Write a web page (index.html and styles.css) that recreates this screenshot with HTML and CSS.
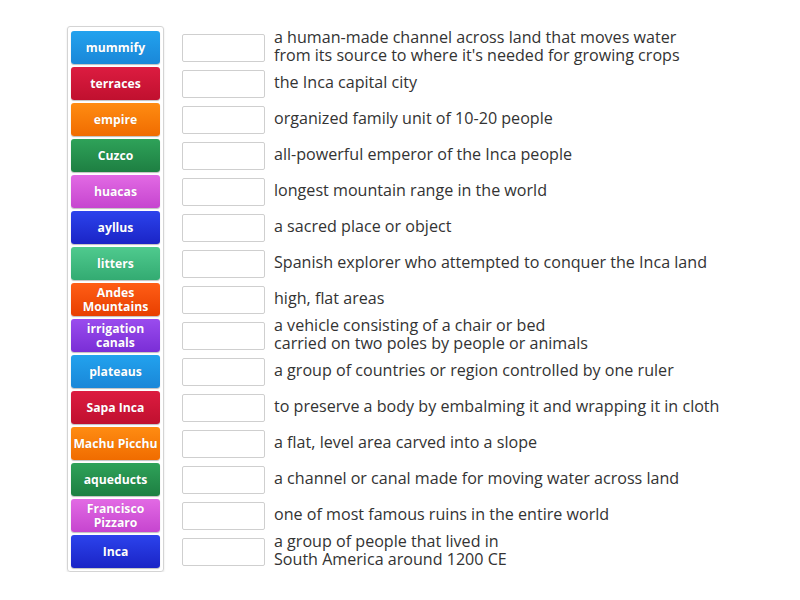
FILE: index.html
```html
<!DOCTYPE html>
<html>
<head>
<meta charset="utf-8">
<link rel="stylesheet" href="styles.css">
</head>
<body>
<div class="page">
  <div class="tiles">
    <div class="tile c-blue">mummify</div>
    <div class="tile c-red">terraces</div>
    <div class="tile c-orange">empire</div>
    <div class="tile c-green">Cuzco</div>
    <div class="tile c-magenta">huacas</div>
    <div class="tile c-navy">ayllus</div>
    <div class="tile c-teal">litters</div>
    <div class="tile c-redorange">Andes Mountains</div>
    <div class="tile c-purple">irrigation canals</div>
    <div class="tile c-blue">plateaus</div>
    <div class="tile c-red">Sapa Inca</div>
    <div class="tile c-orange">Machu Picchu</div>
    <div class="tile c-green">aqueducts</div>
    <div class="tile c-magenta">Francisco Pizzaro</div>
    <div class="tile c-navy">Inca</div>
  </div>
  <div class="defs">
    <div class="row"><div class="slot"></div><div class="def">a human-made channel across land that moves water<br>from its source to where it's needed for growing crops</div></div>
    <div class="row"><div class="slot"></div><div class="def">the Inca capital city</div></div>
    <div class="row"><div class="slot"></div><div class="def">organized family unit of 10-20 people</div></div>
    <div class="row"><div class="slot"></div><div class="def">all-powerful emperor of the Inca people</div></div>
    <div class="row"><div class="slot"></div><div class="def">longest mountain range in the world</div></div>
    <div class="row"><div class="slot"></div><div class="def">a sacred place or object</div></div>
    <div class="row"><div class="slot"></div><div class="def">Spanish explorer who attempted to conquer the Inca land</div></div>
    <div class="row"><div class="slot"></div><div class="def">high, flat areas</div></div>
    <div class="row"><div class="slot"></div><div class="def">a vehicle consisting of a chair or bed<br>carried on two poles by people or animals</div></div>
    <div class="row"><div class="slot"></div><div class="def">a group of countries or region controlled by one ruler</div></div>
    <div class="row"><div class="slot"></div><div class="def">to preserve a body by embalming it and wrapping it in cloth</div></div>
    <div class="row"><div class="slot"></div><div class="def">a flat, level area carved into a slope</div></div>
    <div class="row"><div class="slot"></div><div class="def">a channel or canal made for moving water across land</div></div>
    <div class="row"><div class="slot"></div><div class="def">one of most famous ruins in the entire world</div></div>
    <div class="row"><div class="slot"></div><div class="def">a group of people that lived in<br>South America around 1200 CE</div></div>
  </div>
</div>
</body>
</html>
```

FILE: styles.css
```css
html, body {
  margin: 0;
  padding: 0;
  background: #ffffff;
}
body {
  font-family: "Open Sans", "Noto Sans", sans-serif;
}
.page {
  display: flex;
  align-items: flex-start;
  padding: 26px 0 0 67px;
}
.tiles {
  display: flex;
  flex-direction: column;
  gap: 3px;
  padding: 4px 3px 3px 3px;
  border: 1px solid #d4d4d4;
  border-radius: 3px;
  box-shadow: 0 1px 2px rgba(0,0,0,0.12);
  width: 89px;
}
.tile {
  height: 33px;
  border-radius: 3px;
  color: #ffffff;
  font-weight: 700;
  font-size: 12.2px;
  line-height: 14px;
  display: flex;
  align-items: center;
  justify-content: center;
  text-align: center;
  box-shadow: 0 1px 1px rgba(0,0,0,0.25);
  text-shadow: 0 0 1px rgba(0,0,0,0.15);
}
.c-blue { background: linear-gradient(#22a2ee, #1a87d8); }
.c-red { background: linear-gradient(#dc1c40, #c0102f); }
.c-orange { background: linear-gradient(#ff8c12, #f06c00); }
.c-green { background: linear-gradient(#2ea259, #1e7f42); }
.c-magenta { background: linear-gradient(#e26ae4, #c645cf); }
.c-navy { background: linear-gradient(#2c43ec, #1a24c6); }
.c-teal { background: linear-gradient(#4fca8e, #33ab72); }
.c-redorange { background: linear-gradient(#ff5e16, #e83f00); }
.c-purple { background: linear-gradient(#9a4cee, #7a2ed6); }

.defs {
  display: flex;
  flex-direction: column;
  gap: 3px;
  padding-top: 5px;
  margin-left: 18px;
}
.row {
  height: 33px;
  display: flex;
  align-items: center;
}
.slot {
  width: 81px;
  height: 26px;
  border: 1px solid #cfcfcf;
  border-radius: 2px;
  background: #ffffff;
  flex: none;
}
.def {
  margin-left: 9px;
  margin-top: -3px;
  font-size: 16.1px;
  line-height: 18px;
  color: #333333;
  white-space: nowrap;
}
```
